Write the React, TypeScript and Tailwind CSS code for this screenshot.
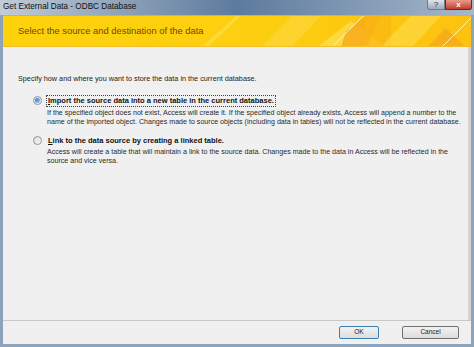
import React from "react";

const font = { fontFamily: '"Liberation Sans", Arial, sans-serif' };

function Radio({ checked }: { checked?: boolean }) {
  return (
    <div className="relative w-[9px] h-[9px] rounded-full border border-[#8e96a0] bg-gradient-to-br from-[#d8dce2] to-[#f8f8f8] flex items-center justify-center shrink-0">
      {checked && <div className="w-[5px] h-[5px] rounded-full bg-gradient-to-br from-[#2c6fc4] to-[#9fc9f2]" />}
    </div>
  );
}

export default function App() {
  return (
    <div className="w-[474px] h-[347px] flex flex-col bg-[#8da3bb] overflow-hidden" style={font}>
      {/* title bar */}
      <div className="h-[15px] flex items-center relative bg-gradient-to-r from-[#c3ccd6] via-[#5d7b9e] to-[#a7b8ca]">
        <span className="pl-[3px] text-[8.2px] text-[#111] leading-none">Get External Data - ODBC Database</span>
        <div className="ml-auto mr-[2px] flex h-[10px] self-start">
          <div className="w-[18px] h-[10px] bg-gradient-to-b from-[#dfe5ec] to-[#9eaabb] border border-[#6c7a8c] border-t-0 rounded-bl-[3px] flex items-center justify-center text-[8px] text-[#223] leading-none">?</div>
          <div className="w-[27px] h-[10px] bg-gradient-to-b from-[#e89a8a] to-[#c33b2a] border border-[#6c2a22] border-t-0 rounded-br-[3px] flex items-center justify-center text-[8px] font-bold text-white leading-none">x</div>
        </div>
      </div>
      <div className="flex-1 flex flex-col mx-[3px] mb-[3px] bg-[#f0f0f0]">
        {/* banner */}
        <div className="h-[32px] relative bg-gradient-to-r from-[#fdd20b] via-[#fdcf10] to-[#fcc20f] border-t border-[#e7b600] border-b border-b-[#f1be2a] flex items-center overflow-hidden">
          <svg className="absolute right-0 top-0" width="330" height="32" viewBox="0 0 330 32">
            <polygon points="60,32 95,0 100,0 65,32" fill="#fde15a" opacity="0.6" />
            <polygon points="120,32 150,0 180,0 150,32" fill="#fdd94a" opacity="0.5" />
            <polygon points="175,32 210,5 245,32" fill="#fde45e" opacity="0.6" />
            <polygon points="205,15 225,0 240,0 225,32 200,32" fill="#f7a91a" opacity="0.8" />
            <polygon points="225,0 250,0 250,32 225,32" fill="#fbb716" opacity="0.7" />
            <polygon points="250,20 270,0 300,0 270,32 240,32" fill="#fde15a" opacity="0.5" />
            <polygon points="285,32 305,12 325,32" fill="#f6a51a" opacity="0.7" />
            <line x1="190" y1="32" x2="222" y2="0" stroke="#fff1a0" strokeWidth="1" />
            <line x1="300" y1="32" x2="330" y2="2" stroke="#fff1a0" strokeWidth="1" />
          </svg>
          <span className="relative pl-[15px] text-[9.4px] text-[#6b4c00] leading-none">Select the source and destination of the data</span>
        </div>
        {/* content */}
        <div className="flex-1 flex flex-col pl-[15px] pt-[28px] border-r-[3px] border-[#d4d4d4]">
          <p className="text-[7.25px] text-[#222] leading-none">Specify how and where you want to store the data in the current database.</p>
          <div className="flex gap-[4px] mt-[13px] pl-[15px]">
            <div className="pt-[1px]"><Radio checked /></div>
            <div className="flex flex-col">
              <span className="self-start text-[7.5px] font-bold text-[#111] leading-none px-[1px] py-[1px] border border-dotted border-[#444]"><span className="underline">I</span>mport the source data into a new table in the current database.</span>
              <p className="mt-[2px] pl-[1px] text-[7.1px] text-[#2a2a2a] leading-[9px] w-[420px]">If the specified object does not exist, Access will create it. If the specified object already exists, Access will append a number to the name of the imported object. Changes made to source objects (including data in tables) will not be reflected in the current database.</p>
            </div>
          </div>
          <div className="flex gap-[4px] mt-[8px] pl-[15px]">
            <div className="pt-[1px]"><Radio /></div>
            <div className="flex flex-col">
              <span className="self-start text-[7.5px] font-bold text-[#111] leading-none px-[1px] py-[1px] border border-transparent"><span className="underline">L</span>ink to the data source by creating a linked table.</span>
              <p className="mt-[2px] pl-[1px] text-[7.1px] text-[#2a2a2a] leading-[9px] w-[420px]">Access will create a table that will maintain a link to the source data. Changes made to the data in Access will be reflected in the source and vice versa.</p>
            </div>
          </div>
        </div>
        {/* footer */}
        <div className="h-[24px] border-t border-[#c8c8c8] flex items-center justify-end gap-[23px] pr-[12px]">
          <button className="w-[40px] h-[13px] border border-[#3c7fb1] bg-gradient-to-b from-[#f2f2f2] to-[#dcdcdc] rounded-[2px] text-[6.5px] text-[#222] leading-none">OK</button>
          <button className="w-[57px] h-[13px] border border-[#707070] bg-gradient-to-b from-[#f2f2f2] to-[#dcdcdc] rounded-[2px] text-[6.5px] text-[#222] leading-none">Cancel</button>
        </div>
      </div>
    </div>
  );
}
